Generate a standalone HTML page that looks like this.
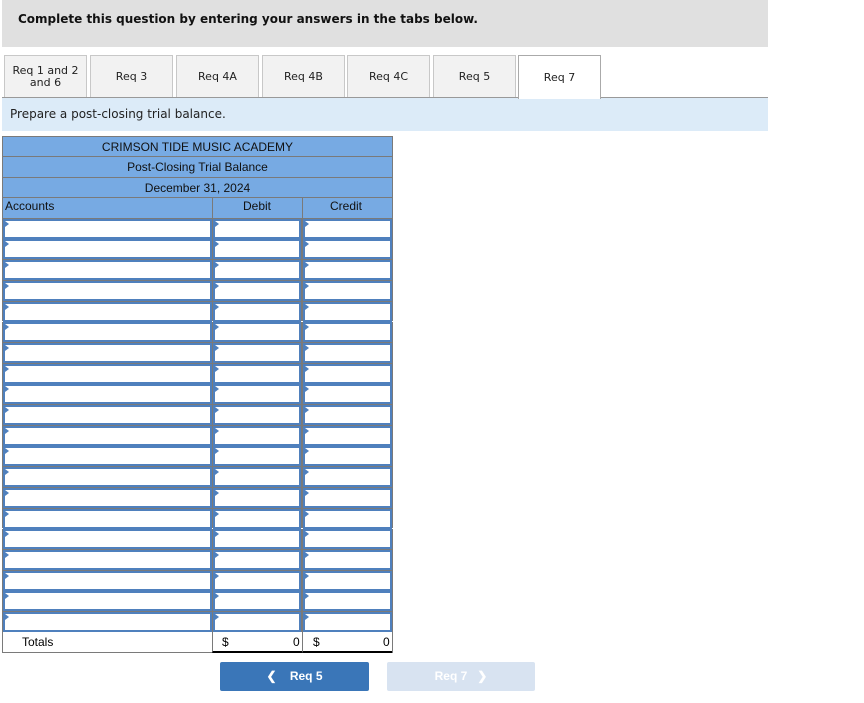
<!DOCTYPE html>
<html><head><style>
body{margin:0;width:864px;height:703px;background:#fff;font-family:"Liberation Sans",sans-serif;position:relative;overflow:hidden}
.a{position:absolute}
.top{left:2px;top:0;width:766px;height:47px;background:#e0e0e0;font-family:"DejaVu Sans",sans-serif;font-weight:bold;font-size:12px;line-height:38px;text-indent:16px;color:#111}
.tab{top:55px;height:42px;width:81px;background:#f2f2f2;border:1px solid #c8c8c8;border-bottom:none;font-family:"DejaVu Sans",sans-serif;font-size:11px;color:#222;display:flex;align-items:center;justify-content:center;text-align:center;line-height:12px}
.band{left:2px;top:97px;width:766px;height:33px;background:#dcebf8;border-top:1px solid #999;font-family:"DejaVu Sans",sans-serif;font-size:12px;line-height:33px;text-indent:8px;color:#222}
.h{left:2px;width:389px;background:#77aae3;border:1px solid #7a7a7a;border-bottom:none;text-align:center;font-size:12px;color:#111;line-height:20px}
.c{background:#fff;border:2px solid #4f80bd;box-sizing:border-box}
.c:before{content:"";position:absolute;left:0;top:0;border-left:4px solid #4f80bd;border-top:3px solid transparent;border-bottom:3px solid transparent}
</style></head><body>
<div class="a top">Complete this question by entering your answers in the tabs below.</div>
<div class="a tab" style="left:4px">Req 1 and 2<br>and 6</div>
<div class="a tab" style="left:90px">Req 3</div>
<div class="a tab" style="left:176px">Req 4A</div>
<div class="a tab" style="left:262px">Req 4B</div>
<div class="a tab" style="left:347px">Req 4C</div>
<div class="a tab" style="left:433px">Req 5</div>
<div class="a tab" style="left:518px;background:#fff;border-color:#aaa;height:43px;z-index:2">Req 7</div>
<div class="a band">Prepare a post-closing trial balance.</div>
<div class="a h" style="top:136px;height:20px">CRIMSON TIDE MUSIC ACADEMY</div>
<div class="a h" style="top:156px;height:20px">Post-Closing Trial Balance</div>
<div class="a h" style="top:177px;height:20px">December 31, 2024</div>
<div class="a h" style="top:197px;height:21px;border-bottom:1px solid #7a7a7a"></div>
<div class="a" style="left:5px;top:199px;font-size:12px;color:#111">Accounts</div>
<div class="a" style="left:212px;top:197px;width:1px;height:22px;background:#7a7a7a"></div>
<div class="a" style="left:302px;top:197px;width:1px;height:22px;background:#7a7a7a"></div>
<div class="a" style="left:243px;top:199px;font-size:12px;color:#111">Debit</div>
<div class="a" style="left:330px;top:199px;font-size:12px;color:#111">Credit</div>
<div id="rows"></div>
<div class="a" style="left:2px;top:632px;width:389px;height:20px;border:1px solid #7a7a7a;border-top:none"></div>
<div class="a" style="left:212px;top:632px;width:90px;height:19px;border-left:1px solid #7a7a7a;border-bottom:2px solid #000"></div>
<div class="a" style="left:302px;top:632px;width:89px;height:19px;border-left:1px solid #7a7a7a;border-bottom:2px solid #000"></div>
<div class="a" style="left:22px;top:635px;font-size:12px">Totals</div>
<div class="a" style="left:222px;top:635px;font-size:12px">$</div>
<div class="a" style="left:293px;top:635px;font-size:12px">0</div>
<div class="a" style="left:313px;top:635px;font-size:12px">$</div>
<div class="a" style="left:383px;top:635px;font-size:12px">0</div>
<div class="a" style="left:220px;top:662px;width:149px;height:29px;background:#3a76b8;border-radius:2px;color:#fff;font-weight:bold;font-size:12px;line-height:29px;text-align:center">&#10094;&nbsp;&nbsp;&nbsp; Req 5</div>
<div class="a" style="left:387px;top:662px;width:148px;height:29px;background:#d8e3f1;border-radius:2px;color:#fff;font-weight:bold;font-size:12px;line-height:29px;text-align:center">Req 7 &nbsp;&nbsp;&#10095;</div>
<script>
var h='';for(var i=0;i<20;i++){var t=218+i*20.7;
h+='<div class="a" style="left:2px;top:'+t+'px;width:391px;height:20.7px;background:#7a7a7a"></div>';
h+='<div class="a c" style="left:3px;top:'+(t+0.7)+'px;width:209px;height:20px"></div>';
h+='<div class="a c" style="left:213px;top:'+(t+0.7)+'px;width:88px;height:20px"></div>';
h+='<div class="a c" style="left:303px;top:'+(t+0.7)+'px;width:89px;height:20px"></div>';}
document.getElementById('rows').innerHTML=h;
</script>
</body></html>
